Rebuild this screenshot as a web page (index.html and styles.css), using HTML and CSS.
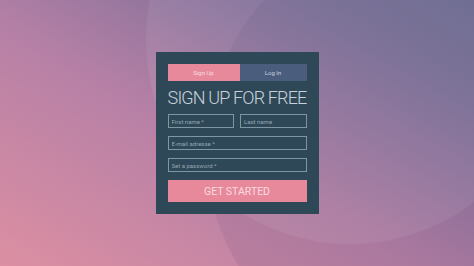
FILE: index.html
```html
<!DOCTYPE html>
<html>
<head>
    <title>Sign Up</title>
    <link rel="stylesheet" href="styles.css">
</head>
<body>
    <div class="form-card">
        <div class="tabs">
            <div class="tab tab-active">Sign Up</div>
            <div class="tab">Log In</div>
        </div>
        <h1>SIGN UP FOR FREE</h1>
        <form class="signup-form">
            <div class="row">
                <input type="text" class="field" placeholder="First name *">
                <input type="text" class="field" placeholder="Last name">
            </div>
            <input type="email" class="field" placeholder="E-mail adresse *">
            <input type="password" class="field" placeholder="Set a password *">
            <button type="button" class="submit-button">GET STARTED</button>
        </form>
    </div>
</body>
</html>
```

FILE: styles.css
```css
html, body {
    height: 100%;
}

body {
    margin: 0;
    display: flex;
    align-items: center;
    justify-content: center;
    font-family: Roboto, "Liberation Sans", sans-serif;
    background:
        radial-gradient(circle 205px at 350px 40px, rgba(255,255,255,0.065) 99%, rgba(255,255,255,0) 100%),
        radial-gradient(circle 225px at 430px 150px, rgba(50,40,90,0.09) 99%, rgba(50,40,90,0) 100%),
        linear-gradient(to top right, #dc8fa2 0%, #b680a6 45%, #7d6f98 80%, #6a6a90 100%);
}

.form-card {
    width: 139px;
    padding: 12px;
    background-color: #2f4858;
}

.tabs {
    display: flex;
    height: 17px;
}

.tab {
    flex: 1;
    display: flex;
    align-items: center;
    justify-content: center;
    font-size: 6px;
    color: #c9d2de;
    background-color: #4a5d7c;
}

.tab-active {
    flex: 0 0 72px;
    background-color: #e8899b;
    color: #f8dce2;
}

h1 {
    margin: 6px 0 6px 0;
    font-size: 18px;
    font-weight: 300;
    line-height: 21px;
    letter-spacing: -0.85px;
    text-align: center;
    color: #c8d2da;
    white-space: nowrap;
}

.signup-form {
    display: flex;
    flex-direction: column;
    gap: 8px;
}

.row {
    display: flex;
    gap: 6px;
}

.field {
    box-sizing: border-box;
    width: 100%;
    height: 14px;
    margin: 0;
    padding: 0 3px;
    border: 1px solid #7f97a4;
    background: transparent;
    font-family: Roboto, "Liberation Sans", sans-serif;
    font-size: 6px;
    color: #c8d2da;
    outline: none;
}

.row .field {
    flex: 1;
    min-width: 0;
}

.field::placeholder {
    color: #93a6b1;
}

.submit-button {
    height: 22px;
    margin: 0;
    padding: 0;
    border: none;
    background-color: #e8899b;
    color: #f9dbe0;
    font-family: Roboto, "Liberation Sans", sans-serif;
    font-size: 10.5px;
    cursor: pointer;
}
```
